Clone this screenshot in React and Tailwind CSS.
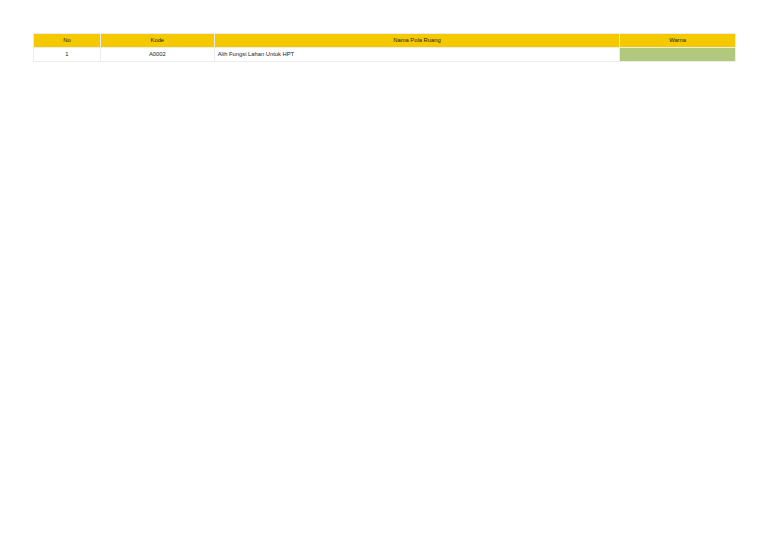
export default function App() {
  return (
    <div className="w-[768px] h-[543px] bg-white" style={{ fontFamily: '"Liberation Sans", Arial, sans-serif' }}>
      <div className="pt-[33px] pl-[33px]">
        <table className="border-collapse text-[5.8px] text-[#222]" style={{ width: 703 }}>
          <thead>
            <tr className="bg-[#f5c900] h-[14px]">
              <th className="w-[67px] font-normal text-center border border-[#ececec] p-0">No</th>
              <th className="w-[114px] font-normal text-center border border-[#ececec] p-0">Kode</th>
              <th className="w-[406px] font-normal text-center border border-[#ececec] p-0">Nama Pola Ruang</th>
              <th className="w-[116px] font-normal text-center border border-[#ececec] p-0">Warna</th>
            </tr>
          </thead>
          <tbody>
            <tr className="h-[14px]">
              <td className="text-center border border-[#ececec] p-0">1</td>
              <td className="text-center border border-[#ececec] p-0">A0002</td>
              <td className="text-left border border-[#ececec] p-0 pl-[3px]">Alih Fungsi Lahan Untuk HPT</td>
              <td className="border border-[#ececec] p-0 bg-[#b1c97c]"></td>
            </tr>
          </tbody>
        </table>
      </div>
    </div>
  );
}
